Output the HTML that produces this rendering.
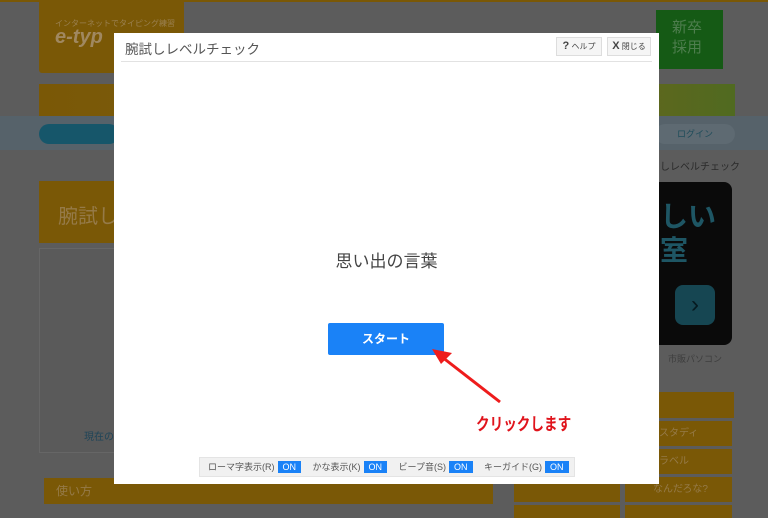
<!DOCTYPE html>
<html><head><meta charset="utf-8"><style>
*{margin:0;padding:0;box-sizing:border-box}
body{width:768px;height:518px;overflow:hidden;position:relative;background:#5c5c5c;font-family:"Liberation Sans","Noto Sans CJK JP",sans-serif}
.a{position:absolute}
.o{background:#7a5806}
</style></head><body>
<div class="a o" style="left:0;top:0;width:768px;height:2px"></div>
<div class="a o" style="left:39px;top:0;width:145px;height:73px;border-radius:3px"></div>
<div class="a" style="left:55px;top:18px;color:#9a8050;font-size:8px">インターネットでタイピング練習</div>
<div class="a" style="left:55px;top:26px;color:#a08860;font-size:20px;font-weight:bold;font-style:italic">e-typ</div>
<div class="a" style="left:656px;top:10px;width:67px;height:59px;background:#155a15"></div>
<div class="a" style="left:672px;top:18px;color:#4e7e4e;font-size:15px;line-height:20px">新卒<br>採用</div>
<div class="a" style="left:39px;top:84px;width:696px;height:32px;background:linear-gradient(90deg,#7a5806,#7a6018 60%,#506a20)"></div>
<div class="a" style="left:0;top:116px;width:768px;height:34px;background:#56626a"></div>
<div class="a" style="left:39px;top:124px;width:80px;height:20px;background:#16566a;border-radius:10px"></div>
<div class="a" style="left:655px;top:124px;width:80px;height:20px;background:#5e6a72;border-radius:10px;color:#1e4c5a;font-size:9px;text-align:center;line-height:20px">ログイン</div>
<div class="a" style="left:660px;top:158px;color:#2a2a2a;font-size:10px">しレベルチェック</div>
<div class="a o" style="left:39px;top:181px;width:80px;height:62px"></div>
<div class="a" style="left:58px;top:200px;color:#957a48;font-size:20px">腕試し</div>
<div class="a" style="left:39px;top:248px;width:80px;height:205px;background:#5a5a5a;border:1px solid #666"></div>
<div class="a" style="left:659px;top:182px;width:73px;height:163px;background:#0a0a0a;border-radius:0 8px 8px 0"></div>
<div class="a" style="left:660px;top:200px;color:#1e5664;font-size:28px;line-height:34px;font-weight:bold">しい<br>室</div>
<div class="a" style="left:675px;top:285px;width:40px;height:40px;background:#164652;border-radius:8px;color:#061a20;font-size:24px;text-align:center;line-height:40px">›</div>
<div class="a" style="left:668px;top:352px;color:#3e3e3e;font-size:9px">市販パソコン</div>
<div class="a o" style="left:659px;top:392px;width:75px;height:26px"></div>
<div class="a o" style="left:659px;top:421px;width:73px;height:25px;color:#957a48;font-size:10px;line-height:25px">スタディ</div>
<div class="a o" style="left:659px;top:449px;width:73px;height:25px;color:#957a48;font-size:10px;line-height:25px">ラベル</div>
<div class="a o" style="left:514px;top:477px;width:106px;height:25px"></div>
<div class="a o" style="left:625px;top:477px;width:107px;height:25px;color:#957a48;font-size:10px;line-height:25px;padding-left:28px">なんだろな?</div>
<div class="a o" style="left:514px;top:505px;width:106px;height:13px"></div>
<div class="a o" style="left:625px;top:505px;width:107px;height:13px"></div>
<div class="a o" style="left:44px;top:478px;width:449px;height:26px;color:#957a48;font-size:12px;line-height:26px;padding-left:12px">使い方</div>
<div class="a" style="left:84px;top:428px;color:#1e4458;font-size:10px">現在の</div>

<div class="a" style="left:114px;top:33px;width:545px;height:451px;background:#fff">
 <div class="a" style="left:11px;top:5px;font-size:13.5px;color:#555">腕試しレベルチェック</div>
 <div class="a" style="left:7px;top:28px;width:531px;height:1px;background:#e2e2e2"></div>
 <div class="a" style="left:442px;top:4px;width:46px;height:19px;border:1px solid #ddd;background:#f5f5f5;font-size:8px;color:#444;line-height:17px;text-align:center"><b style="font-size:11px">?</b> ヘルプ</div>
 <div class="a" style="left:493px;top:4px;width:44px;height:19px;border:1px solid #ddd;background:#f5f5f5;font-size:8px;color:#444;line-height:17px;text-align:center"><b style="font-size:11px">X</b> 閉じる</div>
 <div class="a" style="left:0;top:214px;width:545px;text-align:center;font-size:17px;color:#444">思い出の言葉</div>
 <div class="a" style="left:214px;top:290px;width:116px;height:32px;background:#1a82f7;border-radius:2px;color:#fff;font-weight:bold;font-size:12px;text-align:center;line-height:32px">スタート</div>
 <div class="a" style="left:85px;top:424px;width:376px;height:20px;background:#f1f1f1;border:1px solid #e4e4e4;font-size:9px;color:#555;line-height:18px;white-space:nowrap">
  <span style="margin-left:8px">ローマ字表示(R)</span><span style="background:#1a82f7;color:#fff;padding:1px 5px;margin-left:3px">ON</span>
  <span style="margin-left:9px">かな表示(K)</span><span style="background:#1a82f7;color:#fff;padding:1px 5px;margin-left:3px">ON</span>
  <span style="margin-left:9px">ビープ音(S)</span><span style="background:#1a82f7;color:#fff;padding:1px 5px;margin-left:3px">ON</span>
  <span style="margin-left:9px">キーガイド(G)</span><span style="background:#1a82f7;color:#fff;padding:1px 5px;margin-left:3px">ON</span>
 </div>
</div>
<svg class="a" style="left:0;top:0" width="768" height="518"><line x1="500" y1="402" x2="442" y2="357" stroke="#ee1c1c" stroke-width="3"/><polygon points="432,349 452,353 441,364" fill="#ee1c1c"/></svg>
<div class="a" style="left:476px;top:410px;color:#e0141c;font-weight:bold;font-size:17px;transform:scaleX(0.8);transform-origin:left top;white-space:nowrap">クリックします</div>
</body></html>
